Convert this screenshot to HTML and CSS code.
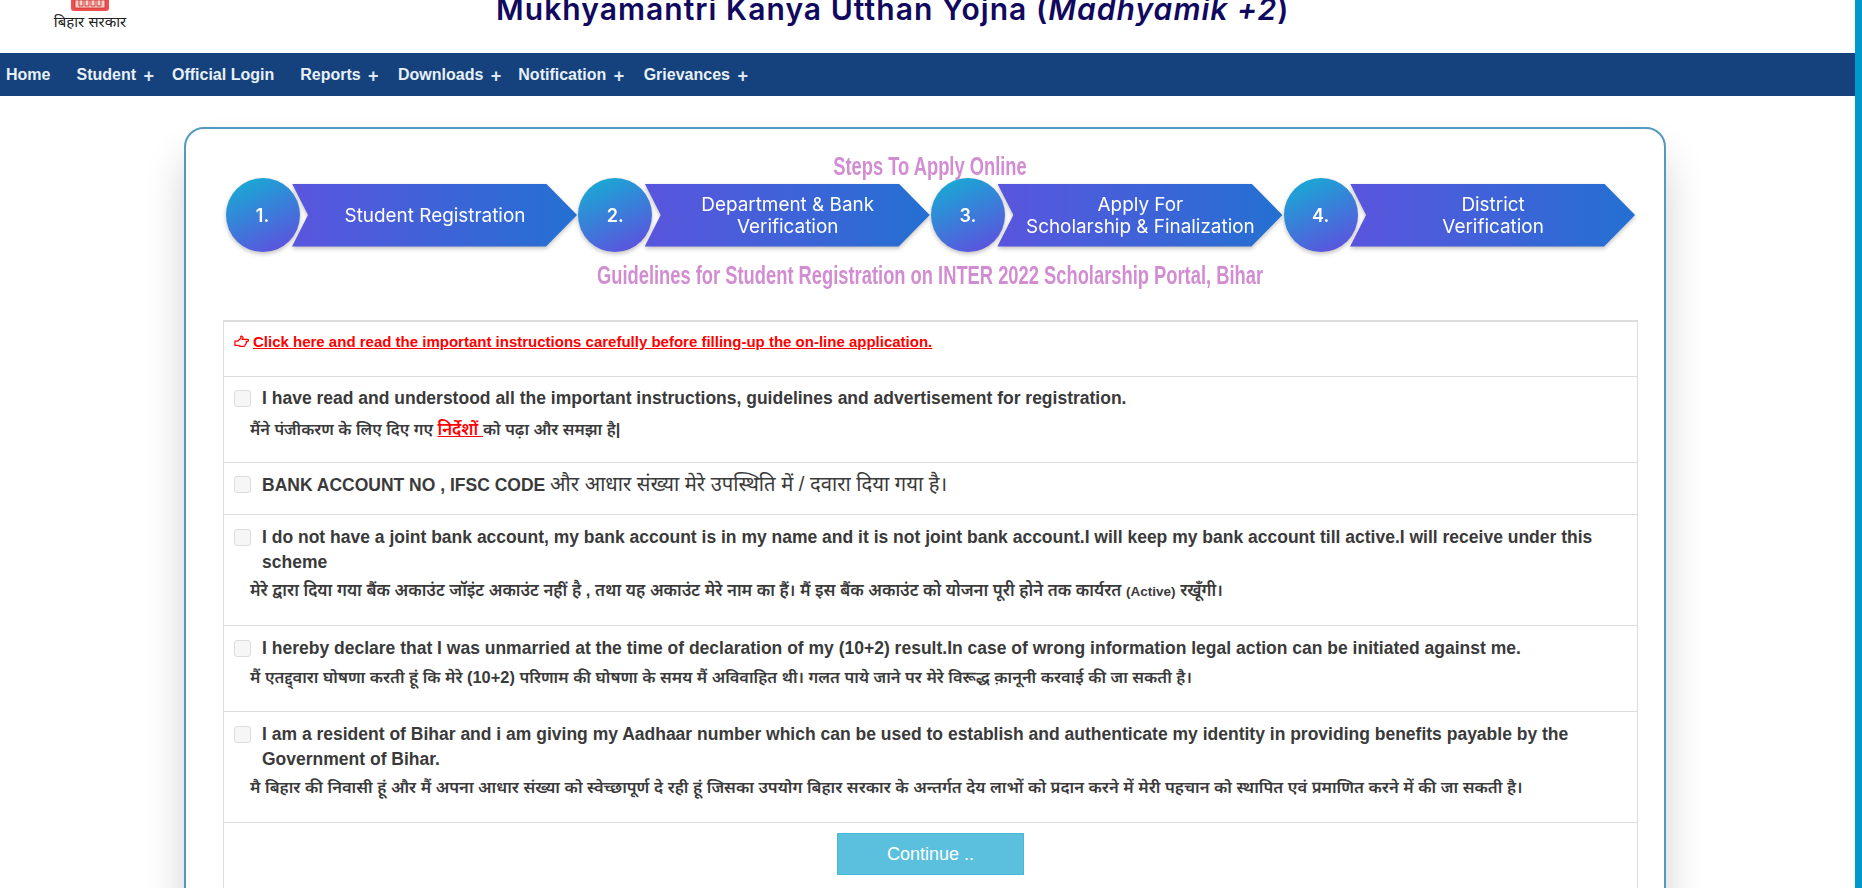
FILE: index.html
```html
<!DOCTYPE html>
<html lang="hi">
<head>
<meta charset="utf-8">
<title>Mukhyamantri Kanya Utthan Yojna</title>
<link rel="stylesheet" href="styles.css">
</head>
<body>
<div class="page">
  <div class="main">
    <header class="top">
      <div class="logo">
        <svg class="emblem" viewBox="0 0 40 11" aria-hidden="true">
          <path d="M1 0v8q0 3 3 3h32q3 0 3-3V0z" fill="#ee4f4f"/>
          <path d="M5 0v8h30V0z" fill="#fbd0c8" stroke="#c92f2f" stroke-width=".8"/>
          <path d="M9 0v6h4V0M15 0v6h4V0M21 0v6h4V0M27 0v6h4V0" fill="none" stroke="#c92f2f" stroke-width=".9"/>
        </svg>
        <span class="logo-text">बिहार सरकार</span>
      </div>
      <h1 class="title">Mukhyamantri Kanya Utthan Yojna (<em>Madhyamik +2</em>)</h1>
    </header>
    <nav class="nav">
      <a class="nav-item home">Home</a>
      <a class="nav-item student">Student <b class="plus">+</b></a>
      <a class="nav-item official">Official Login</a>
      <a class="nav-item reports">Reports <b class="plus">+</b></a>
      <a class="nav-item downloads">Downloads <b class="plus">+</b></a>
      <a class="nav-item notification">Notification <b class="plus">+</b></a>
      <a class="nav-item">Grievances <b class="plus">+</b></a>
    </nav>
    <section class="card">
      <h2 class="heading steps-title">Steps To Apply Online</h2>
      <div class="steps">
        <div class="step"><div class="num">1.</div><div class="arrow">Student Registration</div></div>
        <div class="step"><div class="num">2.</div><div class="arrow">Department &amp; Bank<br>Verification</div></div>
        <div class="step"><div class="num">3.</div><div class="arrow">Apply For<br>Scholarship &amp; Finalization</div></div>
        <div class="step"><div class="num">4.</div><div class="arrow">District<br>Verification</div></div>
      </div>
      <h2 class="heading guide-title">Guidelines for Student Registration on INTER 2022 Scholarship Portal, Bihar</h2>
      <div class="table">
        <div class="row row-link">
          <a class="instr"><svg class="hand" viewBox="0 0 16 14" aria-hidden="true"><path d="M1 6h3l3.6-3.2L7 1.3C7 .4 8.9.4 9.4 1.8c.3.9 0 1.7-.4 2.4h5.4c1.4 0 1.4 2.2 0 2.2h-1.2c.5.8.2 1.6-.5 1.8.3.9-.2 1.6-.8 1.7.2 1-.5 1.7-1.4 1.7H7.3c-1.2 0-2-.9-3.1-1H1z" fill="#fff" stroke="#f00" stroke-width="1.3"/></svg><span class="instr-text">Click here and read the important instructions carefully before filling-up the on-line application.</span></a>
        </div>
        <div class="row row-1">
          <label class="check"><span class="box"></span><span>I have read and understood all the important instructions, guidelines and advertisement for registration.</span></label>
          <p class="hi hi-a">मैंने पंजीकरण के लिए दिए गए <a class="red-link">निर्देशों </a>को पढ़ा और समझा है|</p>
        </div>
        <div class="row row-2">
          <label class="check"><span class="box"></span><span>BANK ACCOUNT NO , IFSC CODE <span class="big-hi">और आधार संख्या मेरे उपस्थिति में / दवारा दिया गया है।</span></span></label>
        </div>
        <div class="row row-3">
          <label class="check"><span class="box"></span><span>I do not have a joint bank account, my bank account is in my name and it is not joint bank account.I will keep my bank account till active.I will receive under this scheme</span></label>
          <p class="hi hi-b">मेरे द्वारा दिया गया बैंक अकाउंट जॉइंट अकाउंट नहीं है , तथा यह अकाउंट मेरे नाम का हैं। मैं इस बैंक अकाउंट को योजना पूरी होने तक कार्यरत <span class="latin">(Active)</span> रखूँगी।</p>
        </div>
        <div class="row row-4">
          <label class="check"><span class="box"></span><span>I hereby declare that I was unmarried at the time of declaration of my (10+2) result.In case of wrong information legal action can be initiated against me.</span></label>
          <p class="hi hi-c">मैं एतद्द्वारा घोषणा करती हूं कि मेरे (10+2) परिणाम की घोषणा के समय मैं अविवाहित थी। गलत पाये जाने पर मेरे विरूद्ध क़ानूनी करवाई की जा सकती है।</p>
        </div>
        <div class="row row-3">
          <label class="check"><span class="box"></span><span>I am a resident of Bihar and i am giving my Aadhaar number which can be used to establish and authenticate my identity in providing benefits payable by the Government of Bihar.</span></label>
          <p class="hi hi-d">मै बिहार की निवासी हूं और मैं अपना आधार संख्या को स्वेच्छापूर्ण दे रही हूं जिसका उपयोग बिहार सरकार के अन्तर्गत देय लाभों को प्रदान करने में मेरी पहचान को स्थापित एवं प्रमाणित करने में की जा सकती है।</p>
        </div>
        <div class="row row-btn"><button class="continue">Continue ..</button></div>
      </div>
    </section>
  </div>
  <div class="scrollbar"></div>
</div>
</body>
</html>
```
FILE: styles.css
```css
* { box-sizing: border-box; }
html, body { margin: 0; height: 100%; overflow: hidden; background: #fff; }
body { font-family: "Liberation Sans", "Noto Sans Devanagari", "Noto Sans", sans-serif; color: #3a3a3a; }
.page { display: flex; height: 888px; }
.main { flex: 1; min-width: 0; overflow: hidden; }
.scrollbar { width: 7px; background: #0099cc; }

.top { height: 53px; display: flex; }
.logo { margin-left: 53px; width: 74px; display: flex; flex-direction: column; align-items: center; }
.emblem { width: 40px; height: 11px; display: block; flex: none; }
.logo-text { font-size: 15px; line-height: 15px; color: #222; margin-top: 3px; white-space: nowrap; }
.title { margin: 0 0 0 369px; font: 600 30px/18px Inter, sans-serif; letter-spacing: 1.05px; color: #10095e; white-space: nowrap; }
.title em { font-style: italic; }

.nav { height: 43px; background: #15427c; display: flex; align-items: center; color: #e8f0f8; font-weight: 700; font-size: 16px; line-height: 18px; padding-left: 6px; }
.nav-item { white-space: nowrap; }
.plus { font-size: 18px; line-height: 0; color: #dfe8f2; margin-left: 3px; vertical-align: -2px; }
.home { margin-right: 26px; }
.student { margin-right: 18px; }
.official { margin-right: 26px; }
.reports { margin-right: 19.4px; }
.downloads { margin-right: 17px; }
.notification { margin-right: 19.4px; }

.card { width: 1482px; margin: 31px 0 0 184px; border: 2px solid #5499c0; border-radius: 20px; height: 900px; background: #fff; box-shadow: 0 30px 40px rgba(0,0,0,.18); padding: 22px 0 0 39px; }
.heading { margin: 0; font: 700 26px/30px "Liberation Sans", sans-serif; color: #d28dd2; text-align: center; width: 1410px; transform: scaleX(.705); white-space: nowrap; }
.steps-title { height: 27px; }
.guide-title { height: 60px; margin-top: 8px; }

.steps { display: flex; gap: 1.2px; width: 1420px; padding-left: .5px; }
.step { display: flex; align-items: center; height: 74px; filter: drop-shadow(0 2px 2px rgba(0,0,0,.25)); }
.num { width: 74px; height: 74px; flex: none; border-radius: 50%; background: linear-gradient(155deg, #18aad4 8%, #5a55de 88%); color: #fff; font: 600 18px Inter, sans-serif; display: flex; align-items: center; justify-content: center; position: relative; z-index: 1; }
.arrow { width: 285px; height: 63px; margin-left: -7.5px; background: linear-gradient(90deg, #5a55de, #2470d2); clip-path: polygon(0 0, 254px 0, 100% 50%, 254px 100%, 0 100%, 16px 50%); color: #fff; font: 400 18.9px/22.5px Inter, sans-serif; display: flex; align-items: center; justify-content: center; text-align: center; padding: 2px 15px 0 16px; white-space: nowrap; }

.table { width: 1415px; margin-left: -2px; border: 1px solid #ddd; border-top-width: 2px; }
.row { border-top: 1px solid #ddd; padding: 0 8px 0 10px; }
.row:first-child { border-top: 0; }
.row-link { height: 54px; padding-top: 10px; }
.row-1 { height: 86px; padding-top: 9px; }
.row-2 { height: 52px; padding-top: 9px; }
.row-3 { height: 111px; padding-top: 10px; }
.row-4 { height: 86px; padding-top: 10px; }
.row-btn { padding: 10px 0 0; display: flex; justify-content: center; height: 120px; }
.instr { display: flex; align-items: center; gap: 4px; color: #f00; font-weight: 700; font-size: 15px; line-height: 20px; }
.hand { width: 15px; height: 14px; flex: none; }
.instr-text { text-decoration: underline; }
.check { display: flex; gap: 11px; font-size: 17.5px; font-weight: 700; line-height: 25px; }
.box { flex: none; width: 17px; height: 17px; margin-top: 4px; border: 1px solid #ddd; border-radius: 3px; background: #f6f6f6; }
.big-hi { font-size: 20.2px; font-weight: 400; }
.hi { margin: 0 0 0 16px; font-weight: 600; line-height: 20px; }
.hi-a { margin-top: 8px; font-size: 16.25px; }
.hi-b { margin-top: 6px; font-size: 16.7px; }
.hi-c { margin-top: 6px; font-size: 16.42px; }
.hi-d { margin-top: 5px; font-size: 16.5px; }
.latin { font-size: 13.5px; font-weight: 700; }
.red-link { color: #f00; text-decoration: underline; font-size: 16.8px; }
.continue { width: 187px; height: 42px; background: #5bc0de; border: 1px solid #46b8da; color: #fff; font: 400 18px "Liberation Sans", sans-serif; }
```
